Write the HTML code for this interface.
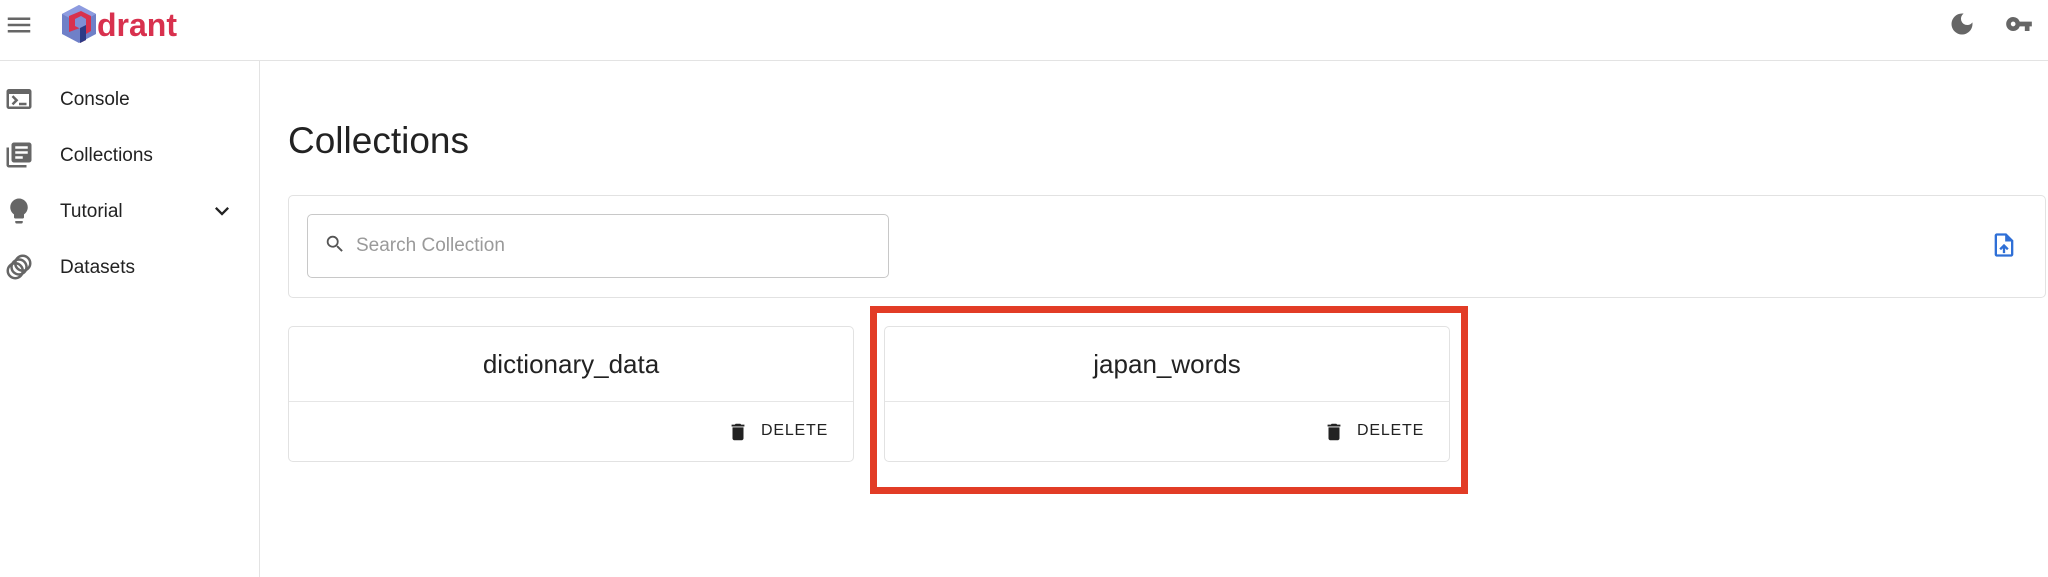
<!DOCTYPE html>
<html><head><meta charset="utf-8"><style>
*{box-sizing:border-box;margin:0;padding:0}
body{width:2048px;height:577px;background:#fff;font-family:"Liberation Sans",Arial,sans-serif;color:#222;position:relative;overflow:hidden}
.abs{position:absolute}
.hdr{left:0;top:0;width:2048px;height:61px;border-bottom:1px solid #e3e3e3}
.side{left:259px;top:61px;width:1px;height:516px;background:#e3e3e3}
.nav{left:60px;font-size:19px;color:#222;line-height:24px}
.panel{border:1px solid #e2e2e2;border-radius:5px;background:#fff}
.card{border:1px solid #e2e2e2;border-radius:5px}
.ctitle{position:absolute;left:0;right:0;top:22px;text-align:center;font-size:26px;color:#222}
.div{position:absolute;left:0;right:0;top:74px;height:1px;background:#e6e6e6}
.del{position:absolute;font-size:16px;letter-spacing:.8px;color:#222;top:95px}
</style></head><body>
<div class="abs hdr"></div>
<svg class="abs" style="left:4px;top:10px" width="30" height="30" viewBox="0 0 24 24"><path d="M3 18h18v-2H3v2zm0-5h18v-2H3v2zm0-7v2h18V6H3z" fill="#666"/></svg>
<svg class="abs" style="left:59px;top:4px" width="40" height="40" viewBox="0 0 40 40">
<polygon points="20,1 37,10 37,30 20,39 3,30 3,10" fill="#6f80c8"/>
<polygon points="20,1 37,10 20,19 3,10" fill="#8d9be0"/>
<path d="M10 12 L22 7 L32 12 V27 L27 30 V36 L21 39 V24 L10 28 Z" fill="#d8314e"/>
<polygon points="16,15 22,12 27,15 27,22 22,25 16,22" fill="#7f8fd6"/>
<polygon points="21,24 27,21 27,36 21,39" fill="#2d3a86"/>
</svg>
<div class="abs" style="left:97px;top:7px;font-size:32px;font-weight:bold;color:#d8314e">drant</div>
<svg class="abs" style="left:1948px;top:10px" width="28" height="28" viewBox="0 0 24 24"><path d="M12 3a9 9 0 1 0 9 9c0-.46-.04-.92-.1-1.36a5.39 5.39 0 0 1-4.4 2.26 5.4 5.4 0 0 1-3.14-9.8c-.44-.06-.9-.1-1.36-.1z" fill="#666"/></svg>
<svg class="abs" style="left:2003px;top:10px" width="32" height="28" viewBox="0 0 24 24"><path d="M12.65 10A5.99 5.99 0 0 0 7 6c-3.31 0-6 2.69-6 6s2.69 6 6 6a5.99 5.99 0 0 0 5.65-4H17v4h4v-4h2v-4H12.65zM7 14c-1.1 0-2-.9-2-2s.9-2 2-2 2 .9 2 2-.9 2-2 2z" fill="#666"/></svg>
<div class="abs side"></div>
<svg class="abs" style="left:4px;top:84px" width="30" height="30" viewBox="0 0 24 24"><path d="M20 4H4c-1.11 0-2 .9-2 2v12c0 1.1.89 2 2 2h16c1.1 0 2-.9 2-2V6c0-1.1-.89-2-2-2zm0 14H4V8h16v10zm-2-1h-6v-2h6v2zM7.5 17l-1.41-1.41L8.67 13l-2.59-2.59L7.5 9l4 4-4 4z" fill="#666"/></svg>
<div class="abs nav" style="top:88px">Console</div>
<svg class="abs" style="left:4px;top:140px" width="30" height="30" viewBox="0 0 24 24"><path d="M4 6H2v14c0 1.1.9 2 2 2h14v-2H4V6zm16-4H8c-1.1 0-2 .9-2 2v12c0 1.1.9 2 2 2h12c1.1 0 2-.9 2-2V4c0-1.1-.9-2-2-2zm-1 9H9V9h10v2zm-4 4H9v-2h6v2zm4-8H9V5h10v2z" fill="#666"/></svg>
<div class="abs nav" style="top:144px">Collections</div>
<svg class="abs" style="left:4px;top:196px" width="30" height="30" viewBox="0 0 24 24"><path d="M9 21c0 .55.45 1 1 1h4c.55 0 1-.45 1-1v-1H9v1zm3-19C8.14 2 5 5.14 5 9c0 2.38 1.19 4.47 3 5.74V17c0 .55.45 1 1 1h6c.55 0 1-.45 1-1v-2.26c1.81-1.27 3-3.36 3-5.74 0-3.86-3.14-7-7-7z" fill="#666"/></svg>
<div class="abs nav" style="top:200px">Tutorial</div>
<svg class="abs" style="left:208px;top:197px" width="28" height="28" viewBox="0 0 24 24"><path d="M7.41 8.59 12 13.17l4.59-4.58L18 10l-6 6-6-6 1.41-1.41z" fill="#222"/></svg>
<svg class="abs" style="left:4px;top:252px" width="30" height="30" viewBox="0 0 24 24" fill="none" stroke="#666" stroke-width="2"><circle cx="15" cy="9" r="6"/><circle cx="12" cy="12" r="6"/><circle cx="9" cy="15" r="6"/></svg>
<div class="abs nav" style="top:256px">Datasets</div>
<div class="abs" style="left:288px;top:120px;font-size:37px;color:#222">Collections</div>
<div class="abs panel" style="left:288px;top:195px;width:1758px;height:103px"></div>
<div class="abs" style="left:307px;top:214px;width:582px;height:64px;border:1px solid #c8c8c8;border-radius:5px"></div>
<svg class="abs" style="left:324px;top:233px" width="22" height="22" viewBox="0 0 24 24"><path d="M15.5 14h-.79l-.28-.27A6.47 6.47 0 0 0 16 9.5 6.5 6.5 0 1 0 9.5 16c1.61 0 3.09-.59 4.23-1.57l.27.28v.79l5 4.99L20.49 19l-4.99-5zm-6 0C7.01 14 5 11.99 5 9.5S7.01 5 9.5 5 14 7.01 14 9.5 11.99 14 9.5 14z" fill="#555"/></svg>
<div class="abs" style="left:356px;top:235px;font-size:19px;color:#9a9a9a">Search Collection</div>
<svg class="abs" style="left:1990px;top:231px" width="28" height="28" viewBox="0 0 24 24"><path d="M14 2H6c-1.1 0-2 .9-2 2v16c0 1.1.9 2 2 2h12c1.1 0 2-.9 2-2V8l-6-6zm4 18H6V4h7v5h5v11zM8 15.01l1.41 1.41L11 14.84V19h2v-4.16l1.59 1.59L16 15.01 12.01 11z" fill="#2f6fd6"/></svg>
<div class="abs card" style="left:288px;top:326px;width:566px;height:136px">
<div class="ctitle">dictionary_data</div><div class="div"></div>
<svg style="position:absolute;left:438px;top:94px" width="22" height="22" viewBox="0 0 24 24"><path d="M6 19c0 1.1.9 2 2 2h8c1.1 0 2-.9 2-2V7H6v12zM19 4h-3.5l-1-1h-5l-1 1H5v2h14V4z" fill="#222"/></svg>
<div class="del" style="left:472px">DELETE</div></div>
<div class="abs card" style="left:884px;top:326px;width:566px;height:136px">
<div class="ctitle">japan_words</div><div class="div"></div>
<svg style="position:absolute;left:438px;top:94px" width="22" height="22" viewBox="0 0 24 24"><path d="M6 19c0 1.1.9 2 2 2h8c1.1 0 2-.9 2-2V7H6v12zM19 4h-3.5l-1-1h-5l-1 1H5v2h14V4z" fill="#222"/></svg>
<div class="del" style="left:472px">DELETE</div></div>
<div class="abs" style="left:870px;top:306px;width:598px;height:188px;border:7px solid #e23c26"></div>
</body></html>
